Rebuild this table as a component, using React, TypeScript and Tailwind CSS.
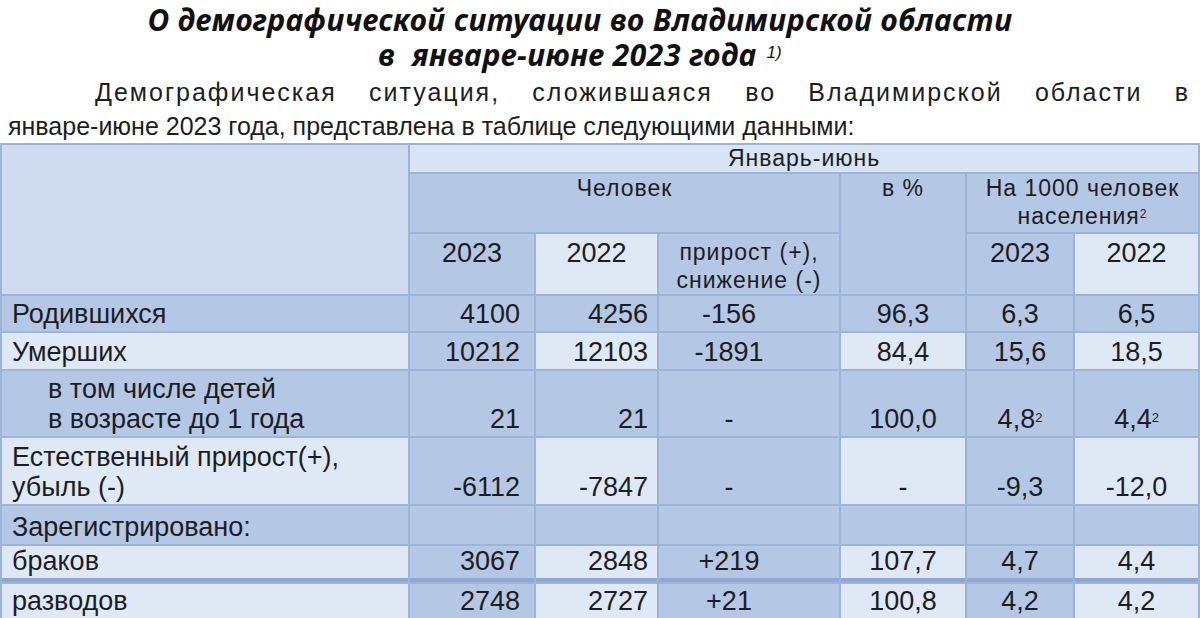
import React from "react";

// Демографическая таблица: Владимирская область, январь-июнь 2023

const MID = "bg-[#b4c7e5]";
const LIGHT = "bg-[#dfe8f5]";

type Row = {
  label: string[];
  vals: string[];
  sup?: boolean[];
  alt: boolean;
  h: string;
  indent?: boolean;
  thick?: boolean;
};

const rows: Row[] = [
  { label: ["Родившихся"], vals: ["4100", "4256", "-156", "96,3", "6,3", "6,5"], alt: false, h: "h-[35px]" },
  { label: ["Умерших"], vals: ["10212", "12103", "-1891", "84,4", "15,6", "18,5"], alt: true, h: "h-[36px]" },
  {
    label: ["в том числе детей", "в возрасте до 1 года"],
    vals: ["21", "21", "-", "100,0", "4,8", "4,4"],
    sup: [false, false, false, false, true, true],
    alt: false,
    h: "h-[65px]",
    indent: true,
  },
  {
    label: ["Естественный прирост(+),", "убыль (-)"],
    vals: ["-6112", "-7847", "-", "-", "-9,3", "-12,0"],
    alt: true,
    h: "h-[66px]",
  },
  { label: ["Зарегистрировано:"], vals: ["", "", "", "", "", ""], alt: false, h: "h-[38px]" },
  { label: ["браков"], vals: ["3067", "2848", "+219", "107,7", "4,7", "4,4"], alt: true, h: "h-[33px]", thick: true },
  { label: ["разводов"], vals: ["2748", "2727", "+21", "100,8", "4,2", "4,2"], alt: true, h: "h-[34px]" },
];

// which value columns stay mid-blue in the light rows
const midCols = [true, false, true, false, true, false];
const align = ["text-right pr-[14px]", "text-right pr-[9px]", "text-center pr-[40px]", "text-center", "text-center", "text-center"];

export default function App() {
  return (
    <div className="w-[1200px] h-[618px] overflow-hidden bg-white font-['Liberation_Sans',Arial,sans-serif] text-[#1c1d22]">
      <div className="pt-[2px] pr-[40px] text-center font-['Noto_Sans','Liberation_Sans',sans-serif] font-bold italic text-[30px] tracking-[0.5px] leading-[35px] text-[#111]">
        <div>О демографической ситуации во Владимирской области</div>
        <div>
          в&nbsp; январе-июне 2023 года
          <sup className="ml-[10px] text-[17px] font-normal italic tracking-normal font-['Liberation_Sans',Arial,sans-serif]">1)</sup>
        </div>
      </div>

      <div className="mt-[3px] pl-[8px] pr-[10px] text-[25px] leading-[34px]">
        <div className="indent-[87px] tracking-[2px] text-justify [text-align-last:justify]">
          Демографическая ситуация, сложившаяся во Владимирской области в
        </div>
        <div>январе-июне 2023 года, представлена в таблице следующими данными:</div>
      </div>

      <table className="w-[1200px] table-fixed border-separate border-spacing-[2px] bg-[#9db4d9]">
        <colgroup>
          <col className="w-[406px]" />
          <col className="w-[124px]" />
          <col className="w-[121px]" />
          <col className="w-[180px]" />
          <col className="w-[124px]" />
          <col className="w-[106px]" />
          <col className="w-[123px]" />
        </colgroup>
        <thead className="text-[23px] tracking-[1px] font-normal">
          <tr className="h-[27px]">
            <td rowSpan={3} className="bg-[#cfdcef]" />
            <td colSpan={6} className="bg-[#d8e3f3] text-center leading-[27px]">
              Январь-июнь
            </td>
          </tr>
          <tr className="h-[58px]">
            <td colSpan={3} className={`${MID} align-top text-center leading-[28px]`}>
              Человек
            </td>
            <td rowSpan={2} className={`${MID} align-top text-center leading-[28px]`}>
              в %
            </td>
            <td colSpan={2} className={`${MID} align-top text-center leading-[28px]`}>
              На 1000 человек
              <br />
              населения<sup className="text-[12px]">2</sup>
            </td>
          </tr>
          <tr className="h-[59px]">
            <td className={`${MID} align-top text-center pt-[4px] text-[27px] leading-[30px] tracking-normal`}>2023</td>
            <td className={`${LIGHT} align-top text-center pt-[4px] text-[27px] leading-[30px] tracking-normal`}>2022</td>
            <td className={`${MID} align-top text-center pt-[4px] leading-[28px]`}>
              прирост (+),
              <br />
              снижение (-)
            </td>
            <td className={`${MID} align-top text-center pt-[4px] text-[27px] leading-[30px] tracking-normal`}>2023</td>
            <td className={`${LIGHT} align-top text-center pt-[4px] text-[27px] leading-[30px] tracking-normal`}>2022</td>
          </tr>
        </thead>
        <tbody className="text-[27px] leading-[30px]">
          {rows.map((r, i) => {
            const border = r.thick ? "border-b-[4px] border-[#8ea8d2]" : "";
            return (
              <tr key={i} className={r.h}>
                <td
                  className={`${r.alt ? LIGHT : MID} ${border} align-bottom pb-[2px] whitespace-nowrap ${
                    r.indent ? "pl-[46px]" : "pl-[10px]"
                  }`}
                >
                  {r.label.map((l, j) => (
                    <div key={j}>{l}</div>
                  ))}
                </td>
                {r.vals.map((v, j) => (
                  <td
                    key={j}
                    className={`${!r.alt || midCols[j] ? MID : LIGHT} ${border} ${align[j]} align-bottom pb-[2px] whitespace-nowrap`}
                  >
                    {v}
                    {r.sup?.[j] && <sup className="text-[13px]">2</sup>}
                  </td>
                ))}
              </tr>
            );
          })}
        </tbody>
      </table>
    </div>
  );
}
